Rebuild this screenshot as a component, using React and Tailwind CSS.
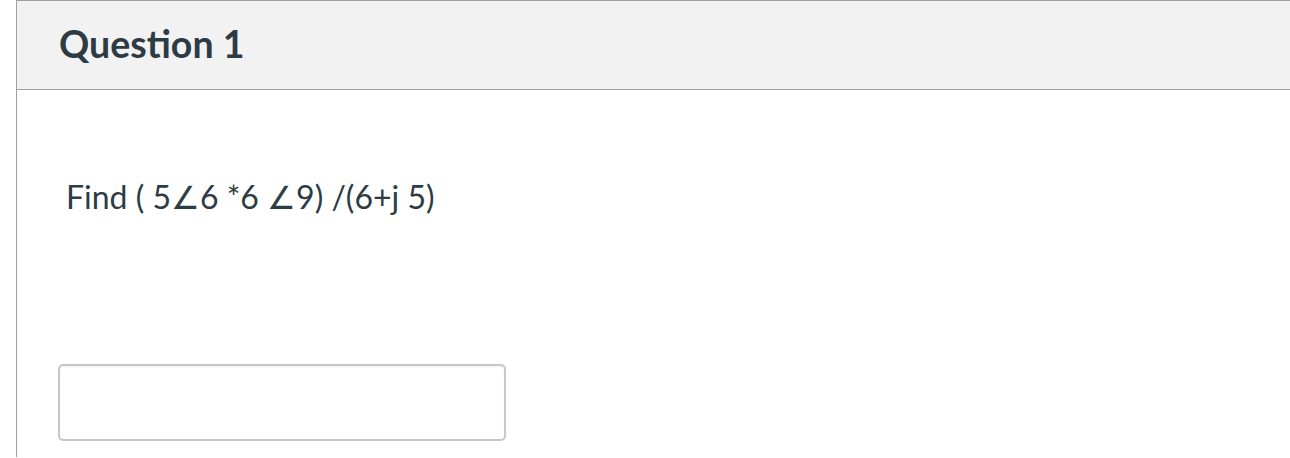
import React from 'react';

const QuestionCard = () => {
  return (
    <div className="ml-4 border-l border-t border-[#a0a0a0] bg-white">
      <div className="flex h-[89px] items-center border-b border-[#a0a0a0] bg-[#f2f2f2] pl-[42px]">
        <h2 className="-mt-[2px] text-[37.5px] font-bold text-[#2d3b45] leading-none">Question 1</h2>
      </div>
      <div className="pl-[49px] pt-[84px] pb-4">
        <p className="text-[32px] leading-[45px] text-[#2d3b45]">
          Find ( 5∠6 *6 ∠9) /(6+j 5)
        </p>
        <input
          type="text"
          className="mt-[145px] -ml-[8px] block h-[77px] w-[448px] rounded-[5px] border-2 border-[#c7c7c7] bg-white px-3 text-[28px] text-[#2d3b45] shadow-[inset_0_1px_2px_rgba(0,0,0,0.06)] outline-none"
        />
      </div>
    </div>
  );
};

export default function App() {
  return (
    <div className="h-[458px] overflow-hidden bg-white font-['Lato','Liberation_Sans',sans-serif]">
      <QuestionCard />
    </div>
  );
}
